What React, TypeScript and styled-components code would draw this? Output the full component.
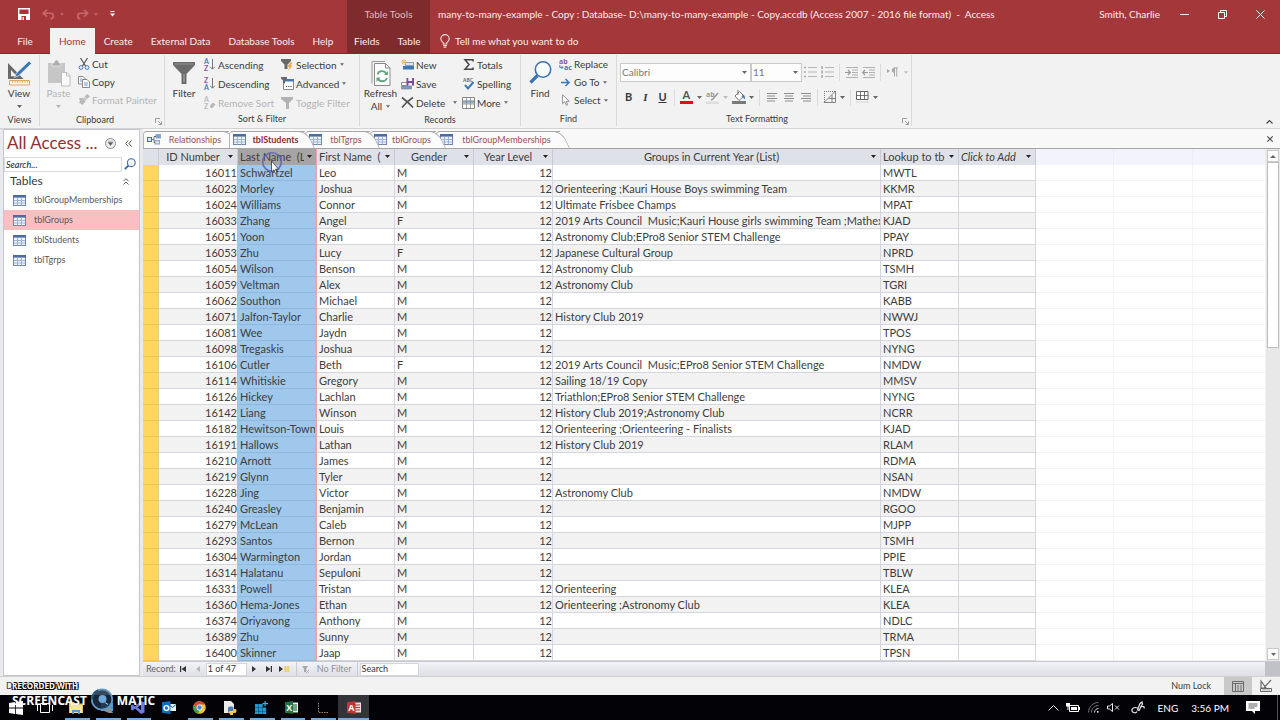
import React from 'react';
import styled, { createGlobalStyle, css } from 'styled-components';

const GlobalStyle = createGlobalStyle`
  *, *::before, *::after { box-sizing: border-box; }
  body { margin: 0; font: 10px/14px Lato, "Open Sans", sans-serif; color: #3b3b3b; background: #f2f2f2; }
  button, input, select { font: inherit; color: inherit; }
  button { background: none; border: 0; padding: 0; white-space: nowrap; }
  svg { display: block; flex: none; overflow: visible; }
`;

/* ---------- Shell ---------- */
const Shell = styled.div`
  position: relative;
  display: flex;
  flex-direction: column;
  min-height: 100vh;
  overflow: hidden;
`;

/* ---------- Header ---------- */
const Header = styled.header`
  display: grid;
  grid-template-columns: 347px 83px 1fr;
  background: #a4373a;
  color: #fbeeee;
  border-bottom: 1px solid #7d2a2d;
`;
const HeaderPart = styled.div`
  display: grid;
  grid-template-rows: 28px 25px;
`;
const ContextPart = styled(HeaderPart)`
  background: #7f2a2c;
`;
const ContextTitle = styled.div`
  display: flex;
  align-items: center;
  justify-content: center;
  color: #e6b9ba;
`;
const QuickAccess = styled.div`
  display: flex;
  align-items: center;
  gap: 7px;
  padding-left: 18px;
`;
const IconButton = styled.button`
  display: flex;
  align-items: center;
  justify-content: center;
`;
const QuickPair = styled.div`
  display: flex;
  align-items: center;
  gap: 5px;
  margin-left: 5px;
`;
const TitleRow = styled.div`
  display: flex;
  align-items: center;
  padding: 0 1px 0 8px;
`;
const Title = styled.h1`
  flex: 1;
  margin: 0;
  font-size: 10px;
  font-weight: 400;
  white-space: pre;
`;
const Account = styled.button`
  margin-right: 5px;
`;
const WindowButton = styled(IconButton)`
  width: 38px;
  height: 28px;
`;
const TabRow = styled.nav<{ $inset?: boolean }>`
  display: flex;
  padding-left: ${(p) => (p.$inset ? 7 : 0)}px;
  gap: ${(p) => (p.$inset ? 18 : 0)}px;
`;
const RibbonTab = styled.button<{ $active?: boolean }>`
  padding: 0 9px;
  ${(p) => p.$active && css`background: #f3f2f2; color: #a4373a; margin-bottom: -1px;`}
`;
const FileTab = styled(RibbonTab)`
  width: 50px;
`;
const ContextTab = styled(RibbonTab)`
  padding: 0;
`;
const TellMe = styled.button`
  display: flex;
  align-items: center;
  gap: 5px;
  padding-left: 10px;
`;

/* ---------- Ribbon ---------- */
const Ribbon = styled.section`
  display: flex;
  height: 75px;
  background: #f2f2f2;
  border-bottom: 1px solid #d2d2d2;
`;
const Group = styled.section<{ $w: number }>`
  display: flex;
  flex-direction: column;
  position: relative;
  width: ${(p) => p.$w}px;
  margin: 1px 0 2px;
  border-right: 1px solid #dadada;
`;
const GroupBody = styled.div`
  display: flex;
  height: 59px;
`;
const GroupLabel = styled.h2<{ $launch?: boolean }>`
  margin: 0;
  padding-right: ${(p) => (p.$launch ? 14 : 0)}px;
  font-size: 9px;
  line-height: 14px;
  font-weight: 400;
  text-align: center;
`;
const Launcher = styled(IconButton)`
  position: absolute;
  right: 2px;
  bottom: 1px;
`;
const BigButton = styled.button<{ $w: number; $off?: boolean }>`
  display: flex;
  flex-direction: column;
  align-items: center;
  width: ${(p) => p.$w}px;
  padding-top: 4px;
  line-height: 13px;
  color: ${(p) => (p.$off ? '#b4b4b4' : 'inherit')};
`;
const BigIcon = styled.span`
  display: flex;
  align-items: center;
  justify-content: center;
  height: 28px;
`;
const BigCaption = styled.span`
  display: flex;
  align-items: center;
  gap: 4px;
  height: 13px;
`;
const Column = styled.div<{ $w: number; $row?: number }>`
  display: grid;
  grid-auto-rows: ${(p) => p.$row ?? 19}px;
  width: ${(p) => p.$w}px;
`;
const SmallButton = styled.button<{ $off?: boolean }>`
  display: flex;
  align-items: center;
  gap: 2px;
  color: ${(p) => (p.$off ? '#b4b4b4' : 'inherit')};
`;
const SmallIcon = styled.span`
  display: flex;
  justify-content: center;
  width: 13px;
`;
const MenuMark = styled.span<{ $split?: boolean }>`
  margin-left: ${(p) => (p.$split ? 6 : 1)}px;
`;
const Formatting = styled.div`
  display: flex;
  flex-direction: column;
  gap: 5px;
  padding: 7px 0 0 3px;
`;
const ToolRow = styled.div`
  display: flex;
  align-items: center;
  height: 20px;
`;
const SelectBox = styled.label<{ $w: number }>`
  display: flex;
  align-items: center;
  width: ${(p) => p.$w}px;
  height: 19px;
  padding-right: 3px;
  background: #fdfdfd;
  border: 1px solid #c9c9c9;
  color: #777;
`;
const Select = styled.select`
  flex: 1;
  min-width: 0;
  appearance: none;
  border: 0;
  padding: 0 1px;
  background: none;
`;
const Tool = styled(IconButton)<{ $w?: number }>`
  width: ${(p) => p.$w ?? 17}px;
  height: 18px;
`;
const Letter = styled.span<{ $kind: 'b' | 'i' | 'u' }>`
  font-size: 11px;
  font-weight: 700;
  ${(p) => p.$kind === 'i' && css`font-family: "Liberation Serif", serif; font-style: italic;`}
  ${(p) => p.$kind === 'u' && css`text-decoration: underline;`}
`;
const Divider = styled.span`
  width: 1px;
  height: 17px;
  margin: 0 3px;
  background: #dcdcdc;
`;
const Collapse = styled(IconButton)`
  margin: auto 7px 4px auto;
`;

/* ---------- Workspace ---------- */
const Workspace = styled.main`
  display: grid;
  grid-template-columns: 137px 1fr;
  gap: 3px;
  flex: 1;
  padding-left: 3px;
  background: #e9eaee;
  border-bottom: 1px solid #cfcfcf;
`;
const Sidebar = styled.aside`
  background: #fff;
  border: 1px solid #c5c7cf;
`;
const SideHead = styled.div`
  display: flex;
  align-items: center;
  height: 26px;
  padding: 0 7px 0 3px;
`;
const SideTitle = styled.h2`
  flex: 1;
  margin: 0;
  font-size: 17px;
  line-height: 24px;
  font-weight: 400;
  color: #8d3235;
`;
const SideMenu = styled(IconButton)`
  margin-right: 9px;
`;
const SearchRow = styled.div`
  display: flex;
  align-items: center;
  justify-content: space-between;
  height: 16px;
  padding-right: 3px;
`;
const SideSearch = styled.input`
  width: 118px;
  height: 15px;
  padding: 0 1px;
  border: 1px solid #d9dbe2;
  font-size: 9px;
  font-style: italic;
  &::placeholder { color: #222; opacity: 1; }
`;
const SectionHead = styled.button`
  display: flex;
  align-items: center;
  justify-content: space-between;
  width: 100%;
  height: 18px;
  padding: 0 10px 0 6px;
  font-size: 12px;
  color: #2f3c4a;
`;
const ObjectList = styled.ul`
  margin: 0;
  padding: 0;
  list-style: none;
`;
const ObjectLink = styled.a<{ $active?: boolean }>`
  display: flex;
  align-items: center;
  gap: 8px;
  height: 20px;
  padding-left: 9px;
  font-size: 9px;
  color: #5a5a5a;
  text-decoration: none;
  background: ${(p) => (p.$active ? '#f9bfc1' : 'transparent')};
`;

/* ---------- Document ---------- */
const Document = styled.section`
  display: flex;
  flex-direction: column;
  min-width: 0;
`;
const DocTabs = styled.nav`
  display: flex;
  align-items: flex-end;
  height: 20px;
  background: #f8f8f8;
  border-bottom: 1px solid #a5a5a8;
`;
const DocTab = styled.button<{ $w: number; $z: number; $active?: boolean }>`
  position: relative;
  z-index: ${(p) => p.$z};
  display: flex;
  align-items: center;
  width: ${(p) => p.$w}px;
  height: 17px;
  padding: 0 0 1px 3px;
  font-size: 9px;
  font-weight: ${(p) => (p.$active ? 700 : 400)};
  color: ${(p) => (p.$active ? '#8a2f32' : '#995255')};
  border-top: 1px solid #a5a5a8;
  border-left: 1px solid #b5b5b8;
  border-top-left-radius: 4px;
  background: #fbfbfb;
  &::after {
    content: "";
    position: absolute;
    z-index: -1;
    top: -1px;
    right: -6px;
    width: 20px;
    height: 17px;
    background: #fbfbfb;
    border: solid #a5a5a8;
    border-width: 1px 1px 0 0;
    border-top-right-radius: 8px 10px;
    transform: skewX(25deg);
  }
`;
const DocTabText = styled.span`
  flex: 1;
  text-align: center;
`;
const DocClose = styled(IconButton)`
  margin: auto 7px auto auto;
`;
const SheetArea = styled.div`
  display: flex;
  flex: 1;
  background: #fff;
`;
const Sheet = styled.table`
  flex: 1;
  width: 100%;
  min-width: 0;
  table-layout: fixed;
  border-collapse: separate;
  border-spacing: 0;
  font-size: 11px;
  line-height: 15px;
  color: #3d3d3d;
`;
const SheetCol = styled.col<{ $w?: number }>`
  width: ${(p) => (p.$w ? `${p.$w}px` : 'auto')};
`;
const HeadCell = styled.th<{ $picked?: boolean; $blank?: boolean }>`
  position: relative;
  height: 16px;
  padding: 0;
  font-weight: 400;
  vertical-align: top;
  background: ${(p) => (p.$picked ? '#a6a4a5' : p.$blank ? '#f3f4fb' : '#dfe1e8')};
  border-right: 1px solid ${(p) => (p.$picked ? '#f3a3a6' : p.$blank ? '#eceef5' : '#c8cbd4')};
`;
const HeadInner = styled.div`
  display: flex;
  align-items: center;
  height: 15px;
  padding: 0 4px 0 2px;
`;
const HeadText = styled.span<{ $align?: 'left' | 'center'; $add?: boolean }>`
  flex: 1;
  overflow: hidden;
  white-space: pre;
  text-align: ${(p) => p.$align ?? 'left'};
  font-style: ${(p) => (p.$add ? 'italic' : 'normal')};
`;
const HeadMenu = styled(IconButton)`
  width: 6px;
  margin-left: 2px;
`;
const Cell = styled.td<{ $right?: boolean; $picked?: boolean; $edge?: boolean }>`
  height: 16px;
  padding: 0 0 0 2px;
  overflow: hidden;
  white-space: pre;
  text-align: ${(p) => (p.$right ? 'right' : 'left')};
  border-right: ${(p) => (p.$picked ? '2px solid #f3a3a6' : p.$edge ? '1px solid #f3a3a6' : '1px solid #d3d6de')};
  border-bottom: 1px solid ${(p) => (p.$picked ? '#8fb8dc' : '#d3d6de')};
  ${(p) => p.$picked && css`background: #9fc8ec;`}
`;
const Selector = styled.td`
  padding: 0;
  background: #ffd75e;
  border-right: 1px solid #e3cf8d;
  border-bottom: 1px solid #f0c64c;
`;
const BlankCell = styled.td`
  padding: 0;
  background: #fff;
  border-right: 1px solid #f3f3f5;
  border-bottom: 1px solid #f3f3f5;
`;
const Row = styled.tr`
  background: #fff;
  &:nth-child(even) { background: #f2f2f2; }
`;
const ScrollBar = styled.div`
  display: flex;
  flex-direction: column;
  width: 14px;
  padding: 1px;
  background: #e8e8e8;
`;
const ScrollButton = styled(IconButton)`
  height: 12px;
  background: #fdfdfd;
  border: 1px solid #c9c9c9;
`;
const Thumb = styled.div`
  height: 186px;
  background: #fff;
  border: 1px solid #bdbdbd;
`;
const Track = styled.div`
  flex: 1;
`;
const Pointer = styled.span`
  position: absolute;
  z-index: 5;
  left: 22px;
  top: 3px;
`;

const RecordBar = styled.div`
  display: flex;
  align-items: center;
  height: 15px;
  padding-left: 3px;
  font-size: 9px;
  color: #5c6270;
  background: linear-gradient(#f2f3f8, #dfe0e5);
  border-top: 1px solid #c6c8cf;
`;
const RecordButton = styled(IconButton)`
  width: 15px;
`;
const RecordInput = styled.input<{ $w: number }>`
  width: ${(p) => p.$w}px;
  height: 13px;
  padding: 0 1px;
  border: 1px solid #d5d6dc;
  background: #fff;
  color: #333;
`;
const FilterState = styled.button`
  display: flex;
  align-items: center;
  gap: 8px;
  margin: 0 2px 0 4px;
  padding: 0 5px;
  color: #8e9097;
  border: solid #cacbd2;
  border-width: 0 1px;
`;
const Corner = styled.span`
  width: 15px;
  height: 14px;
  margin-left: auto;
  background: #c0c2c8;
`;

/* ---------- Status bar ---------- */
const StatusBar = styled.footer`
  display: flex;
  align-items: center;
  height: 18px;
  padding-left: 6px;
  font-size: 9px;
  background: #f2f2f2;
`;
const LockState = styled.span`
  margin-left: auto;
  margin-right: 13px;
`;
const ViewButton = styled(IconButton)<{ $active?: boolean }>`
  width: 28px;
  height: 18px;
  background: ${(p) => (p.$active ? '#c9c9c9' : 'transparent')};
`;

/* ---------- Taskbar ---------- */
const Taskbar = styled.footer`
  display: flex;
  align-items: center;
  height: 25px;
  background: #030307;
  color: #fff;
`;
const SystemButtons = styled.div`
  display: flex;
  width: 61px;
  padding-left: 1px;
`;
const SystemButton = styled(IconButton)`
  width: 29px;
  height: 25px;
`;
const AppList = styled.div`
  display: grid;
  grid-template-columns: repeat(10, 1fr);
  width: 308px;
`;
const AppButton = styled(IconButton)<{ $open?: boolean; $active?: boolean }>`
  position: relative;
  height: 25px;
  background: ${(p) => (p.$active ? '#333439' : 'transparent')};
  &::after {
    content: "";
    position: absolute;
    left: ${(p) => (p.$active ? 0 : 4)}px;
    right: ${(p) => (p.$active ? 0 : 2)}px;
    bottom: 0;
    height: 2px;
    background: ${(p) => (p.$open || p.$active ? '#76a9dc' : 'transparent')};
  }
`;
const Tray = styled.div`
  display: flex;
  align-items: center;
  margin-left: auto;
  gap: 7px;
  padding-right: 2px;
`;
const TrayIcon = styled.span`
  display: flex;
  justify-content: center;
  width: 13px;
`;
const PenSlot = styled(TrayIcon)`
  margin-left: 5px;
`;
const TrayText = styled.span`
  margin-left: 6px;
`;
const NoticeButton = styled(IconButton)`
  width: 34px;
  height: 25px;
`;
const DesktopEdge = styled.span`
  width: 1px;
  height: 25px;
  background: #55565a;
`;

/* ---------- Recorder badge ---------- */
const Recorder = styled.div`
  position: absolute;
  z-index: 10;
  left: 12px;
  bottom: 9px;
  color: #fff;
  font-family: "Open Sans", sans-serif;
  font-weight: 700;
`;
const RecorderTop = styled.div`
  font-size: 8px;
  line-height: 10px;
  text-shadow: 1px 1px 0 #000, -1px 1px 0 #000, 1px -1px 0 #000, 0 0 1px #000;
`;
const RecorderName = styled.div`
  display: flex;
  align-items: center;
  gap: 3px;
  height: 20px;
  font-size: 12px;
`;

/* ---------- Drawings ---------- */
const Caret = ({ c = '#666', s = 5 }: { c?: string; s?: number }) => (
  <svg width={s} height="3" viewBox="0 0 5 3"><path d="M0 0h5L2.500 3z" fill={c} /></svg>
);
const TableIcon = () => (
  <svg width="13" height="11" viewBox="0 0 13 11">
    <rect x=".5" y=".5" width="12" height="10" fill="#eef3fb" stroke="#6f86ad" />
    <rect x="0" y="0" width="13" height="2.600" fill="#4a6ba3" />
    <path d="M1 5.500h11M1 8h11M4.500 3v7.500M8.500 3v7.500" stroke="#9db4d8" />
  </svg>
);
const RelationIcon = () => (
  <svg width="14" height="11" viewBox="0 0 14 11">
    <rect x=".5" y="3.500" width="4" height="4" fill="#dce7f7" stroke="#4a6ba3" />
    <rect x="9" y=".5" width="4.500" height="3.500" fill="#7fa0d4" stroke="#8aa6cf" />
    <rect x="8" y="6.500" width="4.500" height="3.500" fill="#cfdcf1" stroke="#8aa6cf" />
    <path d="M5 5.500h2V2.500h2M7 5.500V8.500h1" fill="none" stroke="#555" strokeWidth=".8" />
  </svg>
);
const SaveIcon = () => (
  <svg width="12" height="12" viewBox="0 0 12 12">
    <path d="M.7.7h10.600v10.600H.7z" fill="none" stroke="#fff" strokeWidth="1.400" />
    <path d="M1 6h10v5H1z" fill="#fff" /><path d="M3.500 8h4.500v4H3.500z" fill="#a4373a" /><path d="M4.500 9h1.500v3H4.500z" fill="#fff" />
  </svg>
);
const UndoIcon = ({ flip }: { flip?: boolean }) => (
  <svg width="13" height="11" viewBox="0 0 13 11">
    <g transform={flip ? 'matrix(-1 0 0 1 13 0)' : undefined} fill="none" stroke="#c4696b" strokeWidth="1.600">
      <path d="M5 .8L1.200 4.200 5 7.600M1.500 4.200h6.500c4.500 0 4.500 5 .5 6" />
    </g>
  </svg>
);
const CustomizeIcon = () => (
  <svg width="5" height="6" viewBox="0 0 5 6"><path d="M.5 0h4v1h-4zM0 2.500h5L2.500 5.500z" fill="#fff" /></svg>
);
const BulbIcon = () => (
  <svg width="10" height="14" viewBox="0 0 10 14" fill="none" stroke="#f8dede" strokeWidth="1.100">
    <path d="M3.200 10V8.600C1.500 7.500.8 6.300.8 4.800a4.200 4.200 0 0 1 8.400 0c0 1.500-.7 2.700-2.400 3.800V10zM3.200 11.600h3.600M3.800 13.200h2.400" />
  </svg>
);
const MinIcon = () => <svg width="9" height="9" viewBox="0 0 9 9"><path d="M0 4.500h9" stroke="#fff" /></svg>;
const RestoreIcon = () => (
  <svg width="9" height="9" viewBox="0 0 9 9" fill="none" stroke="#fff"><path d="M.5 2.500h6v6h-6zM2.500 2V.5h6v6H7" /></svg>
);
const CloseIcon = ({ c = '#fff', s = 9 }: { c?: string; s?: number }) => (
  <svg width={s} height={s} viewBox="0 0 9 9"><path d="M.5.5l8 8M8.500.5l-8 8" stroke={c} strokeWidth={s < 9 ? 1.6 : 1} /></svg>
);
const ViewIcon = () => (
  <svg width="26" height="25" viewBox="0 0 26 25">
    <path d="M2 2v16h15.500zM5 9l6 6.200H5z" fill="#6a6a6a" fillRule="evenodd" />
    <path d="M23 0l2.500 2.500L13 14.500l-4.500 2 1.800-4.300z" fill="#3b78b8" stroke="#f2f2f2" strokeWidth=".7" />
    <path d="M3.500 19.500h20v4.500h-20z" fill="#fdf3e6" stroke="#e0a660" />
    <path d="M6.500 20v2M9 20v2M11.500 20v2M14 20v2M16.500 20v2M19 20v2M21.500 20v2" stroke="#e0a660" strokeWidth=".8" />
  </svg>
);
const PasteIcon = () => (
  <svg width="24" height="27" viewBox="0 0 24 27">
    <path d="M1 3h17v20H1z" fill="#c6c6c6" /><path d="M5 3h2c0-4 5-4 5 0h2v3H5z" fill="#adadad" stroke="#f2f2f2" strokeWidth=".7" />
    <path d="M14.500 12.500h5.500l3 3V26h-8.500z" fill="#fafafa" stroke="#bdbdbd" /><path d="M19.500 12.500v3.500H23" fill="none" stroke="#bdbdbd" />
  </svg>
);
const CutIcon = () => (
  <svg width="12" height="12" viewBox="0 0 12 12">
    <path d="M2.500 0l5 8M9.500 0l-5 8" stroke="#5c5c5c" strokeWidth="1.300" />
    <circle cx="3" cy="9.500" r="1.900" fill="none" stroke="#4779b4" /><circle cx="9" cy="9.500" r="1.900" fill="none" stroke="#4779b4" />
  </svg>
);
const CopyIcon = () => (
  <svg width="12" height="12" viewBox="0 0 12 12" fill="#fff" stroke="#7a7a7a" strokeWidth=".9">
    <path d="M.5.500h4.500l2 2V8H.5z" /><path d="M4.500 3.500h4.500l2.500 2.500v5.500h-7z" />
    <path d="M2 3h2M2 5h2M6 7h4M6 9h4" stroke="#5f8ec4" />
  </svg>
);
const PainterIcon = () => (
  <svg width="12" height="12" viewBox="0 0 12 12" fill="#b9b9b9"><path d="M9 0l3 2.500L9 5 6.500 2.500zM6 3l2.700 2.700-1 1L5 4zM1 4h3.500l3 3.300L4.500 11 2.500 9.500 1 9l1-1.500z" /></svg>
);
const LauncherIcon = () => (
  <svg width="7" height="7" viewBox="0 0 7 7" fill="none" stroke="#888" strokeWidth=".8"><path d="M.5 5V.5H5M3 3l3.500 3.500M6.500 3.500v3h-3" /></svg>
);
const FilterBig = () => (
  <svg width="22" height="22" viewBox="0 0 22 22"><path d="M0 0h22v3l-8.500 9V22h-5V12L0 3z" fill="#6b6b6b" /><path d="M1.500 2h19" stroke="#8f8f8f" /><path d="M10.500 12h1v8h-1z" fill="#aaa" /></svg>
);
const SortText = styled.text`
  font: 700 7px Lato, sans-serif;
`;
const SortIcon = ({ a, b, ca, cb, off }: { a: string; b: string; ca: string; cb: string; off?: boolean }) => (
  <svg width="12" height="13" viewBox="0 0 12 13">
    <SortText x="0" y="6" fill={ca}>{a}</SortText><SortText x="0" y="12.500" fill={cb}>{b}</SortText>
    {off ? <path d="M6 9.500l3-3 2.500 2-3 3.500H6.500z" fill="#b9b9b9" /> : <path d="M8.500 1v10M6.300 8.800l2.200 2.400 2.200-2.400" fill="none" stroke="#777" />}
  </svg>
);
const FunnelIcon = ({ bolt, off }: { bolt?: boolean; off?: boolean }) => (
  <svg width="13" height="12" viewBox="0 0 13 12">
    <path d={off ? 'M0 0h12v2L8 6v6H5V6L0 2z' : 'M0 0h10v2L6.500 5.500V10h-3V5.500L0 2z'} fill={off ? '#b3b3b3' : '#686868'} />
    {bolt && <path d="M9 3.500L6.500 8h2l-1.500 4 4.500-5.500h-2l2-3z" fill="#eda73f" />}
  </svg>
);
const AdvancedIcon = () => (
  <svg width="13" height="13" viewBox="0 0 13 13">
    <path d="M2.500 3.500h10v9h-10z" fill="#fff" stroke="#8a8a8a" /><path d="M4 2h9v2.500H4z" fill="#4779b4" />
    <path d="M0 0h6v1.500L4 3.500v3H2v-3L0 1.500z" fill="#686868" /><path d="M5 9.500h1.200M7.200 9.500h1.200M9.400 9.500h1.200" stroke="#555" />
  </svg>
);
const RefreshIcon = () => (
  <svg width="20" height="25" viewBox="0 0 20 25">
    <path d="M1 22.500V.5h13" fill="none" stroke="#9a9a9a" /><path d="M3.500 2.500h11l4.500 4.500v17.500H3.500z" fill="#fff" stroke="#8a8a8a" /><path d="M14.500 2.500V7H19" fill="none" stroke="#8a8a8a" />
    <path d="M6.500 13.500c1-4.500 7-4.500 9-.5M16 17c-1.500 4-7 4.500-9 .5" fill="none" stroke="#5fa57e" strokeWidth="1.800" />
    <path d="M17 10v4h-4zM5.500 21v-4.500h4z" fill="#5fa57e" />
  </svg>
);
const NewIcon = () => (
  <svg width="13" height="11" viewBox="0 0 13 11">
    <path d="M4.500 3.500h8v3h-8z" fill="#d9e6f5" stroke="#8a9ab0" /><path d="M2 7h11v3.500H2z" fill="#3b78b8" />
    <path d="M3 0v6M0 3h6M1 1l4 4M5 1L1 5" stroke="#eab65c" strokeWidth=".9" />
  </svg>
);
const SaveRecordIcon = () => (
  <svg width="13" height="12" viewBox="0 0 13 12">
    <path d="M.5 4.500h6v3h-6z" fill="#fff" stroke="#8a8a8a" /><path d="M.5 8h10v3H.5z" fill="#6f9bd0" stroke="#8a8a8a" strokeWidth=".7" />
    <path d="M5.500 0H13v7.500H5.500z" fill="#7c4ba0" /><path d="M7.300 0h3.800v3H7.300zM7.500 5h3.500v2.500H7.500z" fill="#f2f2f2" />
  </svg>
);
const DeleteIcon = () => <svg width="13" height="11" viewBox="0 0 13 11"><path d="M1 .5c4 3 8 6.500 11 10M12 .5C8 3 4 6.500 1 10.500" stroke="#555" strokeWidth="1.700" fill="none" /></svg>;
const SigmaIcon = () => <svg width="10" height="11" viewBox="0 0 10 11"><path d="M9 2.500V.8H1L5 5.500 1 10.200h8V8.500" fill="none" stroke="#444" strokeWidth="1.500" /></svg>;
const TinyText = styled.text`
  font: 700 5px "Open Sans", sans-serif;
`;
const SpellIcon = () => (
  <svg width="12" height="13" viewBox="0 0 12 13"><TinyText x="0" y="4.500" fill="#777">ABC</TinyText><path d="M2 8l3 3.500L10.500 5" fill="none" stroke="#3b78b8" strokeWidth="2" /></svg>
);
const MoreIcon = () => (
  <svg width="13" height="12" viewBox="0 0 13 12"><path d="M.5.500h12v11H.5z" fill="#fff" stroke="#888" /><path d="M1 3.500h11v3H1z" fill="#8fb5dd" /><path d="M0 4h13M0 7h13M4.500 0v12M8.500 0v12" stroke="#888" strokeWidth=".8" /></svg>
);
const FindBig = () => (
  <svg width="23" height="24" viewBox="0 0 23 24"><circle cx="14" cy="8.500" r="7.700" fill="#fbfdff" stroke="#3b74b4" strokeWidth="1.600" /><path d="M8.500 14.500L1.500 21.500" stroke="#3b74b4" strokeWidth="3.200" /></svg>
);
const AbText = styled.text`
  font: 700 7px "Open Sans", sans-serif;
`;
const ReplaceIcon = () => (
  <svg width="13" height="13" viewBox="0 0 13 13"><AbText x="0" y="5.500" fill="#8a5aa8">ab</AbText><AbText x="5" y="12" fill="#4779b4">ac</AbText><path d="M.8 7v2.500h3M2.500 8l1.500 1.500L2.500 11" fill="none" stroke="#4779b4" strokeWidth=".9" /></svg>
);
const GoIcon = () => <svg width="9" height="9" viewBox="0 0 9 9"><path d="M0 4.500h8M4.500 1L8 4.500 4.500 8" fill="none" stroke="#3b78b8" strokeWidth="1.500" /></svg>;
const ArrowIcon = () => <svg width="8" height="12" viewBox="0 0 8 12"><path d="M.6.8v9L2.800 7.700l1.600 3.600 1.300-.6-1.500-3.400h3z" fill="#fff" stroke="#777" strokeWidth=".8" /></svg>;
const ListIcon = ({ marks }: { marks: string }) => (
  <svg width="13" height="12" viewBox="0 0 13 12"><path d="M4 1.500h9M4 6h9M4 10.500h9" stroke="#b5b5b5" /><path d={marks} stroke="#a8a8a8" strokeWidth="1.600" /></svg>
);
const IndentIcon = ({ out }: { out?: boolean }) => (
  <svg width="13" height="11" viewBox="0 0 13 11" fill="none"><path d="M1 .5h12M7 3h6M7 5.500h6M7 8h6M1 10.500h12" stroke="#b0b0b0" /><path d={out ? 'M6 5.500H1M3 3L.7 5.500 3 8' : 'M0 5.500h5M3 3l2.300 2.500L3 8'} stroke="#9a9a9a" strokeWidth="1.200" /></svg>
);
const ParaIcon = () => (
  <svg width="12" height="10" viewBox="0 0 12 10" fill="none" stroke="#aaa">
    <path d="M0 2l3 2-3 2z" fill="#aaa" stroke="none" /><path d="M7.500 5.500a2.200 2.200 0 0 1 0-4.500z" fill="#aaa" /><path d="M7.500 1v8.500M9.700 1v8.500M7 .8h4" />
  </svg>
);
const FontText = styled.text`
  font: 700 11px Lato, sans-serif;
`;
const FontColorIcon = () => <svg width="13" height="14" viewBox="0 0 13 14"><FontText x="2.500" y="9" fill="#555">A</FontText><path d="M0 11h13v3H0z" fill="#e01010" /></svg>;
const HighlightIcon = () => <svg width="13" height="13" viewBox="0 0 13 13"><AbText x="0" y="6" fill="#9a9a9a">ab</AbText><path d="M12 2L7 8l-2 1" stroke="#9a9a9a" strokeWidth="1.500" fill="none" /><path d="M0 10.500h13V13H0z" fill="#dedede" /></svg>;
const BucketIcon = () => (
  <svg width="14" height="14" viewBox="0 0 14 14"><path d="M3 6l4.500-4.500L12 6l-5 4.500z" fill="#fff" stroke="#777" /><path d="M6 5V0" stroke="#777" /><path d="M11 4.500c2 1 2.500 3 1.500 5-.8-1-1-2.500-3-3z" fill="#4779b4" /><path d="M0 11h14v3H0z" fill="#7a7a7a" /></svg>
);
const AlignIcon = ({ d }: { d: string }) => <svg width="10" height="9" viewBox="0 0 10 9"><path d={d} stroke="#8d8d8d" /></svg>;
const GridlineIcon = () => (
  <svg width="12" height="12" viewBox="0 0 12 12" fill="none" stroke="#777"><path d="M0 .5h11.500M.5 0v12" strokeDasharray="1 1" /><path d="M11.500 0v11.500H0zM8 4v7.500M4.500 7.500H12" strokeWidth=".9" /></svg>
);
const AltRowIcon = () => (
  <svg width="13" height="12" viewBox="0 0 13 12"><path d="M.5.500h11.500v8H.5z" fill="#fff" stroke="#666" /><path d="M1 4.500h11M4.500 0v8M8.500 0v8" stroke="#666" strokeWidth=".9" /><path d="M0 10h13v2H0z" fill="#e4e4e4" /></svg>
);
const ChevronUp = () => <svg width="7" height="4" viewBox="0 0 7 4"><path d="M.5 3.500l3-3 3 3" fill="none" stroke="#444" strokeWidth="1.200" /></svg>;
const MenuCircle = () => (
  <svg width="11" height="11" viewBox="0 0 11 11"><circle cx="5.500" cy="5.500" r="5" fill="#eceef2" stroke="#8a8f9b" /><path d="M3 4.500h5L5.500 7.500zM3 3.200h5" fill="#555" stroke="#777" strokeWidth=".5" /></svg>
);
const Guillemet = () => <svg width="7" height="7" viewBox="0 0 7 7"><path d="M3.200.5L.7 3.500l2.500 3M6.500.5L4 3.500l2.500 3" fill="none" stroke="#444" strokeWidth=".9" /></svg>;
const DoubleUp = () => <svg width="6" height="7" viewBox="0 0 6 7"><path d="M.5 3.200L3 .7l2.500 2.500M.5 6.500L3 4l2.500 2.500" fill="none" stroke="#444" strokeWidth=".9" /></svg>;
const MagnifyIcon = () => <svg width="12" height="12" viewBox="0 0 12 12"><circle cx="7.300" cy="4.700" r="3.900" fill="#eef5fc" stroke="#3f6ea8" strokeWidth="1.100" /><path d="M4.500 7.500L.8 11.200" stroke="#3f6ea8" strokeWidth="1.800" /></svg>;
const NavIcon = ({ d, c = '#333', star }: { d: string; c?: string; star?: boolean }) => (
  <svg width={star ? 11 : 6} height="6" viewBox={star ? '0 0 11 6' : '0 0 6 6'}><path d={d} fill={c} />{star && <path d="M5 1h5.500M5 3h5.500M5 5h5.500M6.500 0v6M9 0v6" stroke="#e8cf3a" strokeWidth=".9" />}</svg>
);
const NoFilterIcon = () => <svg width="7" height="7" viewBox="0 0 7 7"><path d="M0 0h6L4 3v3H2V3z" fill="#a6a8ae" /><path d="M4 4l3 3M7 4L4 7" stroke="#a6a8ae" strokeWidth=".8" /></svg>;
const CursorDrawing = () => (
  <svg width="24" height="22" viewBox="0 0 24 22">
    <circle cx="12" cy="10" r="9.300" fill="none" stroke="#5a5fb8" strokeOpacity=".85" strokeWidth="1.600" />
    <path d="M11.500 9v11l2.400-2.200 1.600 3.600 1.500-.7-1.600-3.500h3.200z" fill="#fff" stroke="#222" strokeWidth=".7" />
  </svg>
);
const SheetViewIcon = () => (
  <svg width="12" height="11" viewBox="0 0 12 11"><path d="M.5.500h11v10H.5z" fill="none" stroke="#6a6a6a" /><path d="M0 2.500h12M3.500 2v9" stroke="#6a6a6a" /><path d="M5 5h2M8 5h2M5 7h2M8 7h2M5 9h2M8 9h2" stroke="#6a6a6a" strokeWidth=".9" /></svg>
);
const DesignIcon = () => (
  <svg width="12" height="12" viewBox="0 0 12 12"><path d="M1 1v7h5zM11 0L5 6.500l-1 2" fill="none" stroke="#6a6a6a" strokeWidth="1.200" /><path d="M.5 8.500h11v3H.5z" fill="none" stroke="#6a6a6a" /><path d="M3 9v1.500M5 9v1.500M7 9v1.500M9 9v1.500" stroke="#6a6a6a" strokeWidth=".7" /></svg>
);
const WindowsIcon = () => <svg width="14" height="14" viewBox="0 0 14 14" fill="#fff"><path d="M0 2l6-1v5.600H0zM6.800.9L14 0v6.600H6.800zM0 7.400h6V13l-6-1zM6.800 7.400H14V14l-7.200-.9z" /></svg>;
const TaskViewIcon = () => <svg width="16" height="12" viewBox="0 0 16 12" fill="none" stroke="#fff"><path d="M3.500 1.500h9v9h-9zM.5 3v6M15.500 3v6" /></svg>;
const FolderIcon = () => <svg width="14" height="13" viewBox="0 0 14 13"><path d="M0 1h5l1 1.500h8V12H0z" fill="#e8c25a" /><path d="M1 4h12v8H1z" fill="#f7e3a0" /><path d="M3 13V9h8v4H9v-2H5v2z" fill="#4c9fd8" /></svg>;
const CameraIcon = () => <svg width="14" height="13" viewBox="0 0 14 13"><path d="M1 2h12v8H1z" fill="#4f97d0" /><path d="M4 10l6-4 3 6H9z" fill="#8a8f96" /></svg>;
const StudioIcon = () => <svg width="14" height="13" viewBox="0 0 14 13"><path d="M10 0l3.500 1.500v10L10 13 4 7.500 1.500 9.500 0 8.700V4.300l1.500-.8L4 5.500zM10 4L6.500 6.500 10 9z" fill="#6d7be0" fillRule="evenodd" /></svg>;
const LogoText = styled.text`
  font: 700 9px "Open Sans", sans-serif;
  fill: #fff;
`;
const OutlookIcon = () => <svg width="14" height="13" viewBox="0 0 14 13"><path d="M7 3h7v7H7z" fill="#e9f2fb" /><path d="M7 3.500l3.500 3 3.500-3" fill="none" stroke="#0a64ad" /><path d="M0 1.200L8.500 0v13L0 11.800z" fill="#0a6fc2" /><LogoText x=".8" y="9.800">O</LogoText></svg>;
const ChromeIcon = () => (
  <svg width="13" height="13" viewBox="0 0 13 13"><circle cx="6.500" cy="6.500" r="6.300" fill="#f2c433" /><path d="M6.500.2A6.300 6.300 0 0 1 12 3.400H6.500L3.800 8 1 3.400A6.300 6.300 0 0 1 6.500.2z" fill="#d9463a" /><path d="M1 3.400L4 8.400l2.500 1.400-1.400 2.900A6.300 6.300 0 0 1 1 3.400z" fill="#3f9e55" /><circle cx="6.500" cy="6.500" r="2.900" fill="#fff" /><circle cx="6.500" cy="6.500" r="2.200" fill="#4a86e0" /></svg>
);
const PythonIcon = () => <svg width="14" height="14" viewBox="0 0 14 14"><path d="M1 0h7l3 3v9H1z" fill="#ececec" /><path d="M5 7.500c0-1.500 1-2 3-2s2.500.5 2.500 2V10H6.500v1.500H5z" fill="#4a7fb5" /><path d="M13.500 9.500c0 2-1 2.500-1.500 2.500h-2v2H8.500c-1.500 0-2-.5-2-2v-1.500h4V8h1.500c1 0 1.500.5 1.500 1.500z" fill="#f0c93c" /></svg>;
const TilesIcon = () => <svg width="13" height="13" viewBox="0 0 13 13"><path d="M0 3h3.700v3.300H0zM4 3h3.700v3.300H4zM0 6.600h3.700V10H0zM4 6.600h3.700V10H4zM8 6.600h3.200V10H8zM0 10.300h3.700V13H0zM4 10.300h3.700V13H4zM8 10.300h3.200V13H8z" fill="#1f9ad6" /><path d="M9.500 0h1.200v2H13v1.200h-2.300v2H9.500v-2h-2V2h2z" fill="#38b3ea" /></svg>;
const ExcelIcon = () => <svg width="13" height="13" viewBox="0 0 13 13"><path d="M7 1.500h6v10H7z" fill="#e8f3ec" /><path d="M9 3v7M11 3v7" stroke="#217346" strokeWidth="1.200" /><path d="M0 1.200L8 0v13L0 11.800z" fill="#1f7244" /><LogoText x="1.200" y="9.800">X</LogoText></svg>;
const ConsoleIcon = () => <svg width="12" height="12" viewBox="0 0 12 12"><path d="M1.500 1v9.500H11" fill="none" stroke="#9a9a9a" strokeDasharray="1.500 1" strokeWidth=".9" /></svg>;
const AccessIcon = () => <svg width="14" height="13" viewBox="0 0 14 13"><path d="M8 1.500h6v10H8z" fill="#f3dede" /><path d="M8 4h5M8 6.500h5M8 9h5" stroke="#a4373a" /><path d="M0 1.200L8.500 0v13L0 11.800z" fill="#c13438" /><LogoText x="1.200" y="9.800">A</LogoText></svg>;
const TrayUp = () => <svg width="11" height="6" viewBox="0 0 11 6"><path d="M.5 5.500l5-5 5 5" fill="none" stroke="#e8e8e8" /></svg>;
const BatteryIcon = () => <svg width="14" height="10" viewBox="0 0 14 10"><path d="M3.500 2.500h9v6h-9z" fill="none" stroke="#fff" /><path d="M5 4h6v3H5zM13 4h1v3h-1zM0 0h4v3.500H0zM1.500 3h1v4h-1z" fill="#fff" /></svg>;
const WifiIcon = () => <svg width="11" height="11" viewBox="0 0 11 11" fill="none" stroke="#777"><path d="M.5 10.500C.5 5 5 .5 10.500.5M3.500 10.500c0-4 3-7 7-7" /><path d="M6.500 10.500c0-2.500 2-4 4-4" stroke="#ddd" /><circle cx="9.800" cy="9.800" r=".9" fill="#fff" stroke="none" /></svg>;
const MuteIcon = () => <svg width="13" height="9" viewBox="0 0 13 9" fill="none" stroke="#e8e8e8"><path d="M.5 3h2L5.500.5v8L2.500 6h-2zM8 2.500l4 4M12 2.500l-4 4" /></svg>;
const PenIcon = () => <svg width="14" height="13" viewBox="0 0 14 13" fill="none" stroke="#e8e8e8" strokeWidth="1.200"><path d="M6.500 9L9 2.500 11 1l.5 2L8 9.500zM6.500 7C3 5.500 0 8 1 10s4 2.500 5 .5M9 6c3-1 5-.5 4 1.500" /></svg>;
const NoticeIcon = () => <svg width="14" height="13" viewBox="0 0 14 13"><path d="M0 0h14v10H9v3l-3-3H0z" fill="#fff" /><path d="M2.500 3h9M2.500 5h9M2.500 7h6" stroke="#333" strokeWidth=".8" /></svg>;
const RecorderLogo = () => (
  <svg width="24" height="24" viewBox="0 0 24 24"><circle cx="12" cy="10.500" r="10.200" fill="#1a2c40" fillOpacity=".85" stroke="#6499c4" strokeWidth="1.700" /><path d="M2 10.500a10 10 0 0 1 6-9.200" fill="none" stroke="#24527a" strokeWidth="2" /><circle cx="12.500" cy="10" r="4" fill="#6ea6d8" /><path d="M15 13.500l3 2" stroke="#a9c4dc" /></svg>
);

/* ---------- Data ---------- */
type Student = [string, string, string, string, string, string];
const students: Student[] = [
  ['16011', 'Schwartzel', 'Leo', 'M', '', 'MWTL'],
  ['16023', 'Morley', 'Joshua', 'M', 'Orienteering ;Kauri House Boys swimming Team', 'KKMR'],
  ['16024', 'Williams', 'Connor', 'M', 'Ultimate Frisbee Champs', 'MPAT'],
  ['16033', 'Zhang', 'Angel', 'F', '2019 Arts Council  Music;Kauri House girls swimming Team ;Mathex', 'KJAD'],
  ['16051', 'Yoon', 'Ryan', 'M', 'Astronomy Club;EPro8 Senior STEM Challenge', 'PPAY'],
  ['16053', 'Zhu', 'Lucy', 'F', 'Japanese Cultural Group', 'NPRD'],
  ['16054', 'Wilson', 'Benson', 'M', 'Astronomy Club', 'TSMH'],
  ['16059', 'Veltman', 'Alex', 'M', 'Astronomy Club', 'TGRI'],
  ['16062', 'Southon', 'Michael', 'M', '', 'KABB'],
  ['16071', 'Jalfon-Taylor', 'Charlie', 'M', 'History Club 2019', 'NWWJ'],
  ['16081', 'Wee', 'Jaydn', 'M', '', 'TPOS'],
  ['16098', 'Tregaskis', 'Joshua', 'M', '', 'NYNG'],
  ['16106', 'Cutler', 'Beth', 'F', '2019 Arts Council  Music;EPro8 Senior STEM Challenge', 'NMDW'],
  ['16114', 'Whitiskie', 'Gregory', 'M', 'Sailing 18/19 Copy', 'MMSV'],
  ['16126', 'Hickey', 'Lachlan', 'M', 'Triathlon;EPro8 Senior STEM Challenge', 'NYNG'],
  ['16142', 'Liang', 'Winson', 'M', 'History Club 2019;Astronomy Club', 'NCRR'],
  ['16182', 'Hewitson-Town', 'Louis', 'M', 'Orienteering ;Orienteering - Finalists', 'KJAD'],
  ['16191', 'Hallows', 'Lathan', 'M', 'History Club 2019', 'RLAM'],
  ['16210', 'Arnott', 'James', 'M', '', 'RDMA'],
  ['16219', 'Glynn', 'Tyler', 'M', '', 'NSAN'],
  ['16228', 'Jing', 'Victor', 'M', 'Astronomy Club', 'NMDW'],
  ['16240', 'Greasley', 'Benjamin', 'M', '', 'RGOO'],
  ['16279', 'McLean', 'Caleb', 'M', '', 'MJPP'],
  ['16293', 'Santos', 'Bernon', 'M', '', 'TSMH'],
  ['16304', 'Warmington', 'Jordan', 'M', '', 'PPIE'],
  ['16314', 'Halatanu', 'Sepuloni', 'M', '', 'TBLW'],
  ['16331', 'Powell', 'Tristan', 'M', 'Orienteering', 'KLEA'],
  ['16360', 'Hema-Jones', 'Ethan', 'M', 'Orienteering ;Astronomy Club', 'KLEA'],
  ['16374', 'Oriyavong', 'Anthony', 'M', '', 'NDLC'],
  ['16389', 'Zhu', 'Sunny', 'M', '', 'TRMA'],
  ['16400', 'Skinner', 'Jaap', 'M', '', 'TPSN'],
];
const columns: { name: string; align: 'left' | 'center'; picked?: boolean; add?: boolean }[] = [
  { name: 'ID Number', align: 'center' },
  { name: 'Last Name  (L', align: 'left', picked: true },
  { name: 'First Name  (', align: 'left' },
  { name: 'Gender', align: 'center' },
  { name: 'Year Level', align: 'center' },
  { name: 'Groups in Current Year (List)', align: 'center' },
  { name: 'Lookup to tb', align: 'left' },
  { name: 'Click to Add', align: 'left', add: true },
];
const columnWidths = [16, 79, 79, 78, 79, 79, 328, 78, 77, 78, 79];

/* ---------- Pieces ---------- */
type SmallProps = { icon: React.ReactNode; text: string; off?: boolean; menu?: boolean; split?: boolean };
const Small = ({ icon, text, off, menu, split }: SmallProps) => (
  <SmallButton $off={off} disabled={off}>
    <SmallIcon>{icon}</SmallIcon>
    {text}
    {menu && <MenuMark $split={split}><Caret s={4} /></MenuMark>}
  </SmallButton>
);

const Top = () => (
  <Header>
    <HeaderPart>
      <QuickAccess>
        <IconButton aria-label="Save"><SaveIcon /></IconButton>
        <QuickPair>
          <IconButton aria-label="Undo"><UndoIcon /></IconButton>
          <Caret c="#c4696b" s={4} />
        </QuickPair>
        <QuickPair>
          <IconButton aria-label="Redo"><UndoIcon flip /></IconButton>
          <Caret c="#c4696b" s={4} />
        </QuickPair>
        <QuickPair>
          <IconButton aria-label="Customize toolbar"><CustomizeIcon /></IconButton>
        </QuickPair>
      </QuickAccess>
      <TabRow>
        <FileTab>File</FileTab>
        <RibbonTab $active>Home</RibbonTab>
        <RibbonTab>Create</RibbonTab>
        <RibbonTab>External Data</RibbonTab>
        <RibbonTab>Database Tools</RibbonTab>
        <RibbonTab>Help</RibbonTab>
      </TabRow>
    </HeaderPart>
    <ContextPart>
      <ContextTitle>Table Tools</ContextTitle>
      <TabRow $inset>
        <ContextTab>Fields</ContextTab>
        <ContextTab>Table</ContextTab>
      </TabRow>
    </ContextPart>
    <HeaderPart>
      <TitleRow>
        <Title>{'many-to-many-example - Copy : Database- D:\\many-to-many-example - Copy.accdb (Access 2007 - 2016 file format)  -  Access'}</Title>
        <Account>Smith, Charlie</Account>
        <WindowButton aria-label="Minimize"><MinIcon /></WindowButton>
        <WindowButton aria-label="Restore"><RestoreIcon /></WindowButton>
        <WindowButton aria-label="Close"><CloseIcon /></WindowButton>
      </TitleRow>
      <TellMe><BulbIcon />Tell me what you want to do</TellMe>
    </HeaderPart>
  </Header>
);

const RibbonBar = () => (
  <Ribbon>
    <Group $w={40}>
      <GroupBody>
        <BigButton $w={38}>
          <BigIcon><ViewIcon /></BigIcon>
          <BigCaption>View</BigCaption>
          <BigCaption><Caret /></BigCaption>
        </BigButton>
      </GroupBody>
      <GroupLabel>Views</GroupLabel>
    </Group>
    <Group $w={125}>
      <GroupBody>
        <BigButton $w={37} $off disabled>
          <BigIcon><PasteIcon /></BigIcon>
          <BigCaption>Paste</BigCaption>
          <BigCaption><Caret c="#b4b4b4" /></BigCaption>
        </BigButton>
        <Column $w={86} $row={18}>
          <Small icon={<CutIcon />} text="Cut" />
          <Small icon={<CopyIcon />} text="Copy" />
          <Small icon={<PainterIcon />} text="Format Painter" off />
        </Column>
      </GroupBody>
      <GroupLabel $launch>Clipboard</GroupLabel>
      <Launcher aria-label="Clipboard options"><LauncherIcon /></Launcher>
    </Group>
    <Group $w={195}>
      <GroupBody>
        <BigButton $w={38}>
          <BigIcon><FilterBig /></BigIcon>
          <BigCaption>Filter</BigCaption>
        </BigButton>
        <Column $w={78}>
          <Small icon={<SortIcon a="A" b="Z" ca="#4779b4" cb="#8a5aa8" />} text="Ascending" />
          <Small icon={<SortIcon a="Z" b="A" ca="#8a5aa8" cb="#4779b4" />} text="Descending" />
          <Small icon={<SortIcon a="A" b="Z" ca="#b9b9b9" cb="#b9b9b9" off />} text="Remove Sort" off />
        </Column>
        <Column $w={77}>
          <Small icon={<FunnelIcon bolt />} text="Selection" menu />
          <Small icon={<AdvancedIcon />} text="Advanced" menu />
          <Small icon={<FunnelIcon off />} text="Toggle Filter" off />
        </Column>
      </GroupBody>
      <GroupLabel>Sort &amp; Filter</GroupLabel>
    </Group>
    <Group $w={161}>
      <GroupBody>
        <BigButton $w={41}>
          <BigIcon><RefreshIcon /></BigIcon>
          <BigCaption>Refresh</BigCaption>
          <BigCaption>All<Caret s={4} /></BigCaption>
        </BigButton>
        <Column $w={61}>
          <Small icon={<NewIcon />} text="New" />
          <Small icon={<SaveRecordIcon />} text="Save" />
          <Small icon={<DeleteIcon />} text="Delete" menu split />
        </Column>
        <Column $w={58}>
          <Small icon={<SigmaIcon />} text="Totals" />
          <Small icon={<SpellIcon />} text="Spelling" />
          <Small icon={<MoreIcon />} text="More" menu />
        </Column>
      </GroupBody>
      <GroupLabel>Records</GroupLabel>
    </Group>
    <Group $w={96}>
      <GroupBody>
        <BigButton $w={38}>
          <BigIcon><FindBig /></BigIcon>
          <BigCaption>Find</BigCaption>
        </BigButton>
        <Column $w={57} $row={18}>
          <Small icon={<ReplaceIcon />} text="Replace" />
          <Small icon={<GoIcon />} text="Go To" menu />
          <Small icon={<ArrowIcon />} text="Select" menu />
        </Column>
      </GroupBody>
      <GroupLabel>Find</GroupLabel>
    </Group>
    <Group $w={295}>
      <GroupBody>
        <Formatting>
          <ToolRow>
            <SelectBox $w={131}><Select aria-label="Font"><option>Calibri</option></Select><Caret /></SelectBox>
            <SelectBox $w={51}><Select aria-label="Font size"><option>11</option></Select><Caret /></SelectBox>
            <Tool aria-label="Bullets"><ListIcon marks="M0 1.500h2M0 6h2M0 10.500h2" /></Tool>
            <Tool aria-label="Numbering"><ListIcon marks="M1 0v3M1 4.500v3M1 9v3" /></Tool>
            <Divider />
            <Tool aria-label="Increase indent"><IndentIcon /></Tool>
            <Tool aria-label="Decrease indent"><IndentIcon out /></Tool>
            <Divider />
            <Tool aria-label="Text direction"><ParaIcon /></Tool>
            <Tool $w={9} aria-label="Text direction menu"><Caret c="#bbb" s={4} /></Tool>
          </ToolRow>
          <ToolRow>
            <Tool aria-label="Bold"><Letter $kind="b">B</Letter></Tool>
            <Tool aria-label="Italic"><Letter $kind="i">I</Letter></Tool>
            <Tool aria-label="Underline"><Letter $kind="u">U</Letter></Tool>
            <Divider />
            <Tool aria-label="Font color"><FontColorIcon /></Tool>
            <Tool $w={9} aria-label="Font color menu"><Caret /></Tool>
            <Tool aria-label="Highlight"><HighlightIcon /></Tool>
            <Tool $w={9} aria-label="Highlight menu"><Caret c="#bbb" /></Tool>
            <Tool aria-label="Fill color"><BucketIcon /></Tool>
            <Tool $w={9} aria-label="Fill color menu"><Caret /></Tool>
            <Divider />
            <Tool aria-label="Align left"><AlignIcon d="M0 .5h10M0 3h8M0 5.500h10M0 8h8" /></Tool>
            <Tool aria-label="Center"><AlignIcon d="M0 .5h10M1 3h8M0 5.500h10M1 8h8" /></Tool>
            <Tool aria-label="Align right"><AlignIcon d="M0 .5h10M2 3h8M0 5.500h10M2 8h8" /></Tool>
            <Divider />
            <Tool aria-label="Gridlines"><GridlineIcon /></Tool>
            <Tool $w={9} aria-label="Gridlines menu"><Caret /></Tool>
            <Divider />
            <Tool aria-label="Alternate row color"><AltRowIcon /></Tool>
            <Tool $w={9} aria-label="Alternate row color menu"><Caret /></Tool>
          </ToolRow>
        </Formatting>
      </GroupBody>
      <GroupLabel $launch>Text Formatting</GroupLabel>
      <Launcher aria-label="Text formatting options"><LauncherIcon /></Launcher>
    </Group>
    <Collapse aria-label="Collapse ribbon"><ChevronUp /></Collapse>
  </Ribbon>
);

const Navigation = () => (
  <Sidebar>
    <SideHead>
      <SideTitle>All Access ...</SideTitle>
      <SideMenu aria-label="Navigation menu"><MenuCircle /></SideMenu>
      <IconButton aria-label="Collapse pane"><Guillemet /></IconButton>
    </SideHead>
    <SearchRow>
      <SideSearch aria-label="Search objects" placeholder="Search..." />
      <IconButton aria-label="Search"><MagnifyIcon /></IconButton>
    </SearchRow>
    <SectionHead>Tables<DoubleUp /></SectionHead>
    <ObjectList>
      {['tblGroupMemberships', 'tblGroups', 'tblStudents', 'tblTgrps'].map((name) => (
        <li key={name}>
          <ObjectLink href="#" $active={name === 'tblGroups'}><TableIcon />{name}</ObjectLink>
        </li>
      ))}
    </ObjectList>
  </Sidebar>
);

const docTabs = [
  { name: 'Relationships', w: 86 },
  { name: 'tblStudents', w: 76 },
  { name: 'tblTgrps', w: 65 },
  { name: 'tblGroups', w: 66 },
  { name: 'tblGroupMemberships', w: 124 },
];

const Datasheet = () => (
  <Document>
    <DocTabs>
      {docTabs.map((t, i) => (
        <DocTab key={t.name} $w={t.w} $z={i === 1 ? 9 : 6 - i} $active={i === 1}>
          {i === 0 ? <RelationIcon /> : <TableIcon />}
          <DocTabText>{t.name}</DocTabText>
        </DocTab>
      ))}
      <DocClose aria-label="Close tab"><CloseIcon c="#444" s={6} /></DocClose>
    </DocTabs>
    <SheetArea>
      <Sheet>
        <colgroup>
          {columnWidths.map((w, i) => <SheetCol key={i} $w={w} />)}
          <SheetCol />
        </colgroup>
        <thead>
          <tr>
            <HeadCell aria-label="Row selector" />
            {columns.map((c) => (
              <HeadCell key={c.name} $picked={c.picked}>
                <HeadInner>
                  <HeadText $align={c.align} $add={c.add}>{c.name}</HeadText>
                  <HeadMenu aria-label={`${c.name} menu`}><Caret c="#222" /></HeadMenu>
                </HeadInner>
                {c.picked && <Pointer><CursorDrawing /></Pointer>}
              </HeadCell>
            ))}
            <HeadCell $blank /><HeadCell $blank /><HeadCell $blank />
          </tr>
        </thead>
        <tbody>
          {students.map(([id, last, first, gender, groups, lookup]) => (
            <Row key={id}>
              <Selector />
              <Cell $right $edge>{id}</Cell>
              <Cell $picked>{last}</Cell>
              <Cell>{first}</Cell>
              <Cell>{gender}</Cell>
              <Cell $right>12</Cell>
              <Cell>{groups}</Cell>
              <Cell>{lookup}</Cell>
              <Cell />
              <BlankCell /><BlankCell /><BlankCell />
            </Row>
          ))}
        </tbody>
      </Sheet>
      <ScrollBar>
        <ScrollButton aria-label="Scroll up"><svg width="6" height="3" viewBox="0 0 6 3"><path d="M0 3h6L3 0z" fill="#666" /></svg></ScrollButton>
        <Thumb />
        <Track />
        <ScrollButton aria-label="Scroll down"><Caret /></ScrollButton>
      </ScrollBar>
    </SheetArea>
    <RecordBar>
      Record:
      <RecordButton aria-label="First record"><NavIcon d="M0 0h1.200v6H0zM6 0v6L1.500 3z" /></RecordButton>
      <RecordButton aria-label="Previous record"><NavIcon d="M5 0v6L1 3z" c="#b5b7bd" /></RecordButton>
      <RecordInput $w={41} aria-label="Current record" defaultValue="1 of 47" />
      <RecordButton aria-label="Next record"><NavIcon d="M1 0v6l4-3z" /></RecordButton>
      <RecordButton aria-label="Last record"><NavIcon d="M0 0v6l4.500-3zM4.800 0H6v6H4.800z" /></RecordButton>
      <RecordButton aria-label="New record"><NavIcon d="M0 0v6l4-3z" star /></RecordButton>
      <FilterState><NoFilterIcon />No Filter</FilterState>
      <RecordInput $w={59} aria-label="Search records" defaultValue="Search" />
      <Corner />
    </RecordBar>
  </Document>
);

const apps: { name: string; icon: React.ReactNode; open?: boolean; active?: boolean }[] = [
  { name: 'File Explorer', icon: <FolderIcon />, open: true },
  { name: 'Recorder', icon: <CameraIcon />, open: true },
  { name: 'Visual Studio', icon: <StudioIcon />, open: true },
  { name: 'Outlook', icon: <OutlookIcon /> },
  { name: 'Chrome', icon: <ChromeIcon />, open: true },
  { name: 'Python', icon: <PythonIcon />, open: true },
  { name: 'Tiles', icon: <TilesIcon />, open: true },
  { name: 'Excel', icon: <ExcelIcon />, open: true },
  { name: 'Console', icon: <ConsoleIcon />, open: true },
  { name: 'Access', icon: <AccessIcon />, open: true, active: true },
];

export default function App() {
  return (
    <Shell>
      <GlobalStyle />
      <Top />
      <RibbonBar />
      <Workspace>
        <Navigation />
        <Datasheet />
      </Workspace>
      <StatusBar>
        Datasheet View
        <LockState>Num Lock</LockState>
        <ViewButton $active aria-label="Datasheet view"><SheetViewIcon /></ViewButton>
        <ViewButton aria-label="Design view"><DesignIcon /></ViewButton>
      </StatusBar>
      <Taskbar>
        <SystemButtons>
          <SystemButton aria-label="Start"><WindowsIcon /></SystemButton>
          <SystemButton aria-label="Task view"><TaskViewIcon /></SystemButton>
        </SystemButtons>
        <AppList>
          {apps.map((a) => (
            <AppButton key={a.name} aria-label={a.name} $open={a.open} $active={a.active}>{a.icon}</AppButton>
          ))}
        </AppList>
        <Tray>
          <TrayIcon><TrayUp /></TrayIcon>
          <TrayIcon><BatteryIcon /></TrayIcon>
          <TrayIcon><WifiIcon /></TrayIcon>
          <TrayIcon><MuteIcon /></TrayIcon>
          <PenSlot><PenIcon /></PenSlot>
          <TrayText>ENG</TrayText>
          <TrayText>3:56 PM</TrayText>
          <NoticeButton aria-label="Notifications"><NoticeIcon /></NoticeButton>
          <DesktopEdge />
        </Tray>
      </Taskbar>
      <Recorder>
        <RecorderTop>RECORDED WITH</RecorderTop>
        <RecorderName>SCREENCAST<RecorderLogo />MATIC</RecorderName>
      </Recorder>
    </Shell>
  );
}
